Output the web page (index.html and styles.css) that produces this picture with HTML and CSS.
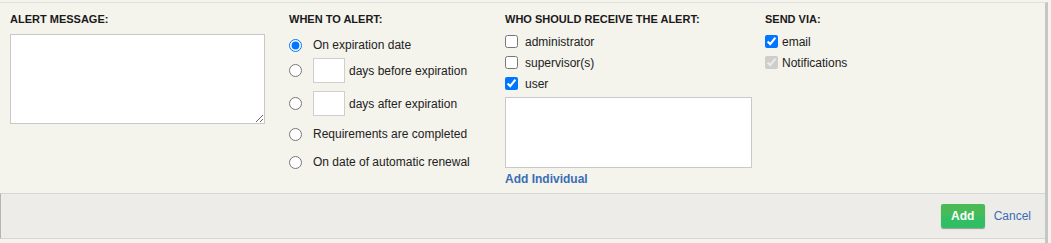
FILE: index.html
```html
<!DOCTYPE html>
<html>
<head>
<meta charset="utf-8">
<link rel="stylesheet" href="styles.css">
</head>
<body>
<div class="page">
  <div class="main">
    <div class="col col-msg">
      <div class="label">ALERT MESSAGE:</div>
      <textarea class="msg" autofocus></textarea>
    </div>
    <div class="col col-when">
      <div class="label">WHEN TO ALERT:</div>
      <div class="opts">
        <label class="opt opt-first"><input type="radio" name="when" checked><span>On expiration date</span></label>
        <label class="opt opt-box opt-second"><input type="radio" name="when"><input type="text" class="days"><span>days before expiration</span></label>
        <label class="opt opt-box"><input type="radio" name="when"><input type="text" class="days"><span>days after expiration</span></label>
        <label class="opt"><input type="radio" name="when"><span>Requirements are completed</span></label>
        <label class="opt"><input type="radio" name="when"><span>On date of automatic renewal</span></label>
      </div>
    </div>
    <div class="col col-who">
      <div class="label">WHO SHOULD RECEIVE THE ALERT:</div>
      <div class="checks">
        <label class="chk"><input type="checkbox"><span>administrator</span></label>
        <label class="chk"><input type="checkbox"><span>supervisor(s)</span></label>
        <label class="chk"><input type="checkbox" checked><span>user</span></label>
      </div>
      <textarea class="who"></textarea>
      <a class="add-ind" href="#">Add Individual</a>
    </div>
    <div class="col col-via">
      <div class="label">SEND VIA:</div>
      <div class="checks">
        <label class="chk chk-via"><input type="checkbox" checked><span>email</span></label>
        <label class="chk chk-via"><input type="checkbox" checked disabled><span>Notifications</span></label>
      </div>
    </div>
  </div>
  <div class="footer">
    <button class="btn-add">Add</button>
    <a class="cancel" href="#">Cancel</a>
  </div>
</div>
</body>
</html>
```
FILE: styles.css
```css
html, body {
  margin: 0;
  padding: 0;
  background: #f4f3ec;
  font-family: "Liberation Sans", Arial, sans-serif;
  font-size: 12px;
  color: #222;
  height: 243px;
  overflow: hidden;
}
.page {
  width: 1048px;
  height: 243px;
  margin-top: 2px;
  border-top: 1px solid #e1e1df;
  border-right: 3px solid #c6c6c6;
  box-sizing: border-box;
}
.main {
  display: grid;
  grid-template-columns: 279px 216px 260px 1fr;
  padding: 9px 0 0 10px;
  height: 190px;
  box-sizing: border-box;
}
.label {
  font-weight: bold;
  font-size: 11px;
  line-height: 14px;
  color: #1a1a1a;
}
textarea {
  display: block;
  border: 1px solid #c9c9c9;
  background: #fff;
  box-sizing: border-box;
  margin: 0;
  padding: 3px;
  font-family: "Liberation Sans", Arial, sans-serif;
  font-size: 12px;
  outline: none;
}
.msg {
  width: 255px;
  height: 90px;
  margin-top: 8px;
}
.opts {
  display: flex;
  flex-direction: column;
  gap: 8px;
  margin-top: 9px;
}
.opt {
  display: flex;
  align-items: center;
  height: 20px;
}
.opt-box {
  height: 25px;
}
.opt-second {
  margin-top: -5px;
}
.opt input[type=radio] {
  margin: 0 11px 0 0;
  width: 13px;
  height: 13px;
}
.days {
  width: 32px;
  height: 25px;
  box-sizing: border-box;
  border: 1px solid #cfcfcf;
  background: #fff;
  margin: 0 4px 0 0;
  padding: 0;
}
.checks {
  display: flex;
  flex-direction: column;
  margin-top: 5px;
}
.chk {
  display: flex;
  align-items: center;
  height: 21px;
}
.chk input {
  margin: 0 7px 0 0;
  width: 13px;
  height: 13px;
}
.chk-via input {
  margin-right: 4px;
}
.who {
  width: 247px;
  height: 71px;
  margin-top: 3px;
  resize: none;
}
.add-ind {
  display: block;
  margin-top: 4px;
  line-height: 14px;
  font-weight: bold;
  color: #3a6db5;
  text-decoration: none;
}
.footer {
  height: 46px;
  box-sizing: border-box;
  background: #edece8;
  border-top: 1px solid #d6d6d4;
  border-bottom: 1px solid #d6d6d4;
  border-left: 1px solid #b4b4b4;
  display: flex;
  align-items: center;
  justify-content: flex-end;
  padding-right: 14px;
  gap: 9px;
}
.btn-add {
  width: 44px;
  height: 24px;
  border: none;
  border-radius: 2px;
  background: linear-gradient(#4cba55 0%, #46bb58 50%, #33bf63 51%, #30be62 100%);
  box-shadow: 0 1px 1px rgba(0,0,0,0.35);
  color: #fff;
  font-family: "Liberation Sans", Arial, sans-serif;
  font-weight: bold;
  font-size: 12px;
  padding: 0;
  margin-top: -1px;
}
.cancel {
  color: #3a6db5;
  text-decoration: none;
  font-size: 12px;
}
```
